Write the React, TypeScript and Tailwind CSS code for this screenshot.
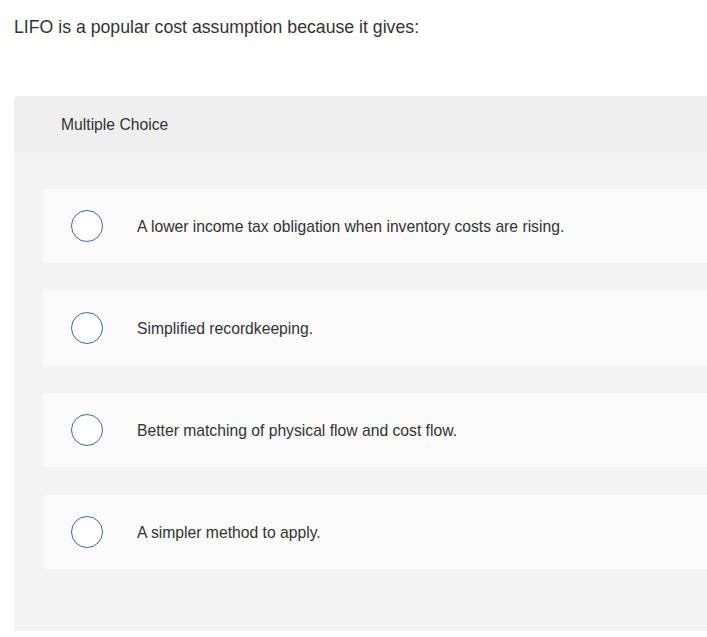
import React from "react";

const options = [
  "A lower income tax obligation when inventory costs are rising.",
  "Simplified recordkeeping.",
  "Better matching of physical flow and cost flow.",
  "A simpler method to apply.",
];

export default function App() {
  return (
    <div
      className="w-[707px] h-[637px] bg-white overflow-hidden text-[#333333]"
      style={{ fontFamily: '"Liberation Sans", Arial, sans-serif' }}
    >
      <div className="pt-[16px] pl-[14px] h-[96px]">
        <p className="text-[17.7px] leading-[22px] m-0">
          LIFO is a popular cost assumption because it gives:
        </p>
      </div>
      <div className="ml-[14px] w-[720px] h-[535px] rounded-tl-[3px] bg-[#f4f4f4]">
        <div className="h-[56px] bg-[#efefef] rounded-tl-[3px] flex items-center pl-[47px]">
          <span className="text-[15.7px] leading-[18px] mt-[1px]">Multiple Choice</span>
        </div>
        <div className="pt-[37px] pl-[29px] flex flex-col gap-[28px]">
          {options.map((o) => (
            <div
              key={o}
              className="h-[74px] bg-[#fafafa] rounded-[3px] flex items-center"
            >
              <div className="ml-[28px] w-[32px] h-[32px] rounded-full border-[1.5px] border-[#3d6a9f] bg-white shrink-0" />
              <span className="ml-[34px] mt-[2px] text-[15.7px] leading-[18px]">{o}</span>
            </div>
          ))}
        </div>
      </div>
    </div>
  );
}
